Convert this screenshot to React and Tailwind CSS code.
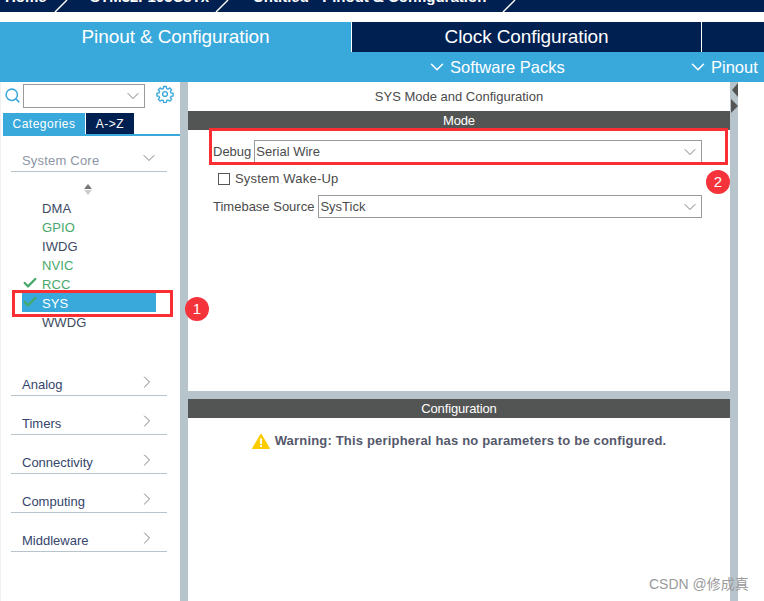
import { Check, ChevronDown, ChevronRight, Search } from 'lucide-react';

const peripherals = [
  { name: 'DMA', color: 'text-[#3c4a63]' },
  { name: 'GPIO', color: 'text-[#47a86b]' },
  { name: 'IWDG', color: 'text-[#3c4a63]' },
  { name: 'NVIC', color: 'text-[#47a86b]' },
  { name: 'RCC', color: 'text-[#47a86b]', checked: true },
  { name: 'SYS', color: 'text-white', checked: true, selected: true },
  { name: 'WWDG', color: 'text-[#3c4a63]' },
];

const categories = ['Analog', 'Timers', 'Connectivity', 'Computing', 'Middleware'];

const Gear = () => (
  <svg width="18" height="18" viewBox="0 0 24 24" fill="none" stroke="#39a9dc" strokeWidth="1.8">
    <circle cx="12" cy="12" r="3.2" />
    <path d="M10.3 2h3.4l.5 2.8 1.9.8 2.3-1.6 2.4 2.4-1.6 2.3.8 1.9 2.8.5v3.4l-2.8.5-.8 1.9 1.6 2.3-2.4 2.4-2.3-1.6-1.9.8-.5 2.8h-3.4l-.5-2.8-1.9-.8-2.3 1.6-2.4-2.4 1.6-2.3-.8-1.9-2.8-.5v-3.4l2.8-.5.8-1.9-1.6-2.3 2.4-2.4 2.3 1.6 1.9-.8z" />
  </svg>
);

const Select = ({ value, className }) => (
  <div className={`flex h-[23px] items-center justify-between border border-[#9a9a9a] bg-white pl-px pr-px text-[13px] text-[#4b4b4b] ${className}`}>
    <span>{value}</span>
    <ChevronDown size={20} strokeWidth={0.9} className="text-[#555]" />
  </div>
);

const Crumb = ({ label, className, slash }) => (
  <div className={`relative h-full shrink-0 ${className}`}>
    <span className="absolute left-0 top-[-14px] whitespace-nowrap text-[15px] font-bold text-white">{label}</span>
    <svg className={`absolute top-0 ${slash}`} width="14" height="12" viewBox="0 0 14 12">
      <path d="M13 0 L1 12" stroke="#fff" strokeWidth="1.4" />
    </svg>
  </div>
);

const App = () => {
  return (
    <div className="relative h-[601px] w-[764px] overflow-hidden bg-white font-['Liberation_Sans',sans-serif]">
      {/* Breadcrumb */}
      <div className="flex h-3 overflow-hidden bg-[#002052] pl-[5px]">
        <Crumb label="Home" className="w-[85px]" slash="left-[49px]" />
        <Crumb label="STM32F103C8Tx" className="w-[163px]" slash="left-[125px]" />
        <Crumb label="Untitled - Pinout & Configuration" className="w-[270px]" slash="left-[249px]" />
      </div>

      {/* Tabs */}
      <div className="mt-[10px] flex h-[30px] bg-[#002052] text-[19px] tracking-[-0.1px] text-white">
        <div className="flex w-[351px] items-center justify-center bg-[#39a9dc]">Pinout &amp; Configuration</div>
        <div className="flex w-[350px] items-center justify-center border-l border-white">Clock Configuration</div>
        <div className="flex-1 border-l border-white"></div>
      </div>

      {/* Sub bar */}
      <div className="flex h-[30px] items-center bg-[#39a9dc] text-[16.5px] text-white">
        <div className="ml-[426px] flex w-[261px] items-center gap-[2px]">
          <ChevronDown size={22} strokeWidth={1.7} />
          <span>Software Packs</span>
        </div>
        <div className="flex items-center gap-[2px] whitespace-nowrap">
          <ChevronDown size={22} strokeWidth={1.7} />
          <span>Pinout</span>
        </div>
      </div>

      <div className="flex h-[519px]">
        {/* Sidebar */}
        <aside className="w-[180px] shrink-0 border-l border-[#f0f0f0] pl-px">
          <div className="flex h-[26px] items-end">
            <Search size={17} strokeWidth={2.2} className="mb-[4px] ml-[2px] text-[#39a9dc]" />
            <div className="ml-[2px] flex h-[24px] w-[122px] items-center justify-end border border-[#9a9a9a] pr-px">
              <ChevronDown size={20} strokeWidth={0.9} className="text-[#555]" />
            </div>
            <div className="mb-[5px] ml-[11px]"><Gear /></div>
          </div>
          <div className="ml-px mt-[5px] flex h-[23px] gap-px border-b-2 border-[#39a9dc] text-[12px] tracking-[0.5px] text-white">
            <div className="flex w-[82px] items-center justify-center bg-[#39a9dc]">Categories</div>
            <div className="flex w-[48px] items-center justify-center bg-[#002052]">A-&gt;Z</div>
          </div>

          <div className="ml-[9px] mt-[12px] flex h-[24px] w-[156px] items-center justify-between border-b border-[#b8c4cc] pl-[11px] pr-[8px] pt-[2px] text-[13px] tracking-[0.2px] text-[#8d96a5]">
            <span>System Core</span>
            <ChevronDown size={20} strokeWidth={0.9} className="mb-[5px] text-[#555]" />
          </div>

          <div className="mt-[12px] flex flex-col items-center pr-[6px]">
            <div className="h-0 w-0 border-x-[4px] border-b-[5px] border-x-transparent border-b-[#777]"></div>
            <div className="mt-px h-0 w-0 border-x-[4px] border-t-[5px] border-x-transparent border-t-[#ccc]"></div>
          </div>

          <div className="mt-[3px] flex flex-col">
            {peripherals.map((item) => (
              <div
                key={item.name}
                className={`relative ml-[20px] flex h-[19px] w-[134px] items-center pl-[20px] pt-[2px] text-[13px] tracking-[0.1px] ${item.color} ${item.selected ? 'bg-[#39a9dc]' : ''}`}
              >
                {item.checked && (
                  <Check size={16} strokeWidth={3.4} className="absolute left-0 top-px text-[#47a86b]" />
                )}
                {item.name}
              </div>
            ))}
          </div>

          <div className="mt-[26px] flex flex-col">
            {categories.map((name) => (
              <div
                key={name}
                className="ml-[9px] mt-[15px] flex h-[24px] w-[156px] items-center justify-between border-b border-[#b8c4cc] pl-[11px] pr-[10px] pt-[2px] text-[13px] text-[#35456b]"
              >
                <span>{name}</span>
                <ChevronRight size={20} strokeWidth={0.9} className="mb-[6px] text-[#555]" />
              </div>
            ))}
          </div>
        </aside>

        {/* Main */}
        <main className="flex w-[558px] shrink-0 border-x-8 border-[#b8c4cc]">
          <div className="flex min-w-0 flex-1 flex-col">
            <div className="h-[309px] bg-white">
              <div className="flex h-[29px] items-center justify-center text-[13px] text-[#4b4b4b]">
                SYS Mode and Configuration
              </div>
              <div className="flex h-[19px] items-center justify-center bg-[#535554] text-[13px] tracking-[-0.15px] text-white">Mode</div>
              <div className="ml-[25px] mt-[10px] flex h-[23px] w-[489px] items-center gap-[3px] text-[13px] text-[#4b4b4b]">
                <span>Debug</span>
                <Select value="Serial Wire" className="flex-1" />
              </div>
              <div className="ml-[30px] mt-[9px] flex h-[13px] items-center gap-[5px] text-[13px] tracking-[0.2px] text-[#4b4b4b]">
                <div className="h-[12px] w-[12px] border border-[#555]"></div>
                <span>System Wake-Up</span>
              </div>
              <div className="ml-[25px] mt-[10px] flex h-[23px] w-[489px] items-center gap-[4px] text-[13px] text-[#4b4b4b]">
                <span className="whitespace-nowrap">Timebase Source</span>
                <Select value="SysTick" className="flex-1" />
              </div>
            </div>
            <div className="h-2 bg-[#b8c4cc]"></div>
            <div className="flex h-[19px] items-center justify-center bg-[#535554] text-[13px] tracking-[-0.15px] text-white">Configuration</div>
            <div className="mt-[13px] flex items-center justify-center gap-[5px] text-[13px] font-bold tracking-[0.18px] text-[#55586b]">
              <svg width="18" height="16" viewBox="0 0 18 16">
                <path d="M9 1 L17.5 15.5 H0.5 Z" fill="#fccb00" stroke="#fccb00" strokeLinejoin="round" />
                <rect x="8" y="5.5" width="2" height="5.5" fill="#fff" />
                <rect x="8" y="12" width="2" height="2" fill="#fff" />
              </svg>
              <span>Warning: This peripheral has no parameters to be configured.</span>
            </div>
          </div>
        </main>
      </div>

      {/* Collapse arrows on the panel edge */}
      <div className="absolute left-[732px] top-[83px] h-0 w-0 border-y-[7px] border-r-[6px] border-y-transparent border-r-[#535554]"></div>
      <div className="absolute left-[731px] top-[99px] h-0 w-0 border-y-[7px] border-l-[7px] border-y-transparent border-l-[#535554]"></div>

      {/* Red annotations */}
      <div className="absolute left-[12px] top-[290px] h-[27px] w-[161px] border-[3px] border-[#fb2f33]"></div>
      <div className="absolute left-[209px] top-[128px] h-[37px] w-[519px] border-[3px] border-[#fb2f33]"></div>
      <div className="absolute left-[185px] top-[297px] flex h-6 w-6 items-center justify-center rounded-full bg-[#f5333a] text-[15px] text-white">1</div>
      <div className="absolute left-[706px] top-[170px] flex h-6 w-6 items-center justify-center rounded-full bg-[#f5333a] text-[15px] text-white">2</div>

      {/* Watermark */}
      <div className="absolute left-[649px] top-[574px] whitespace-nowrap font-['Liberation_Sans','Noto_Sans_CJK_SC',sans-serif] text-[14px] text-[#9a9a9a]">CSDN @修成真</div>
    </div>
  );
};

export default App;
